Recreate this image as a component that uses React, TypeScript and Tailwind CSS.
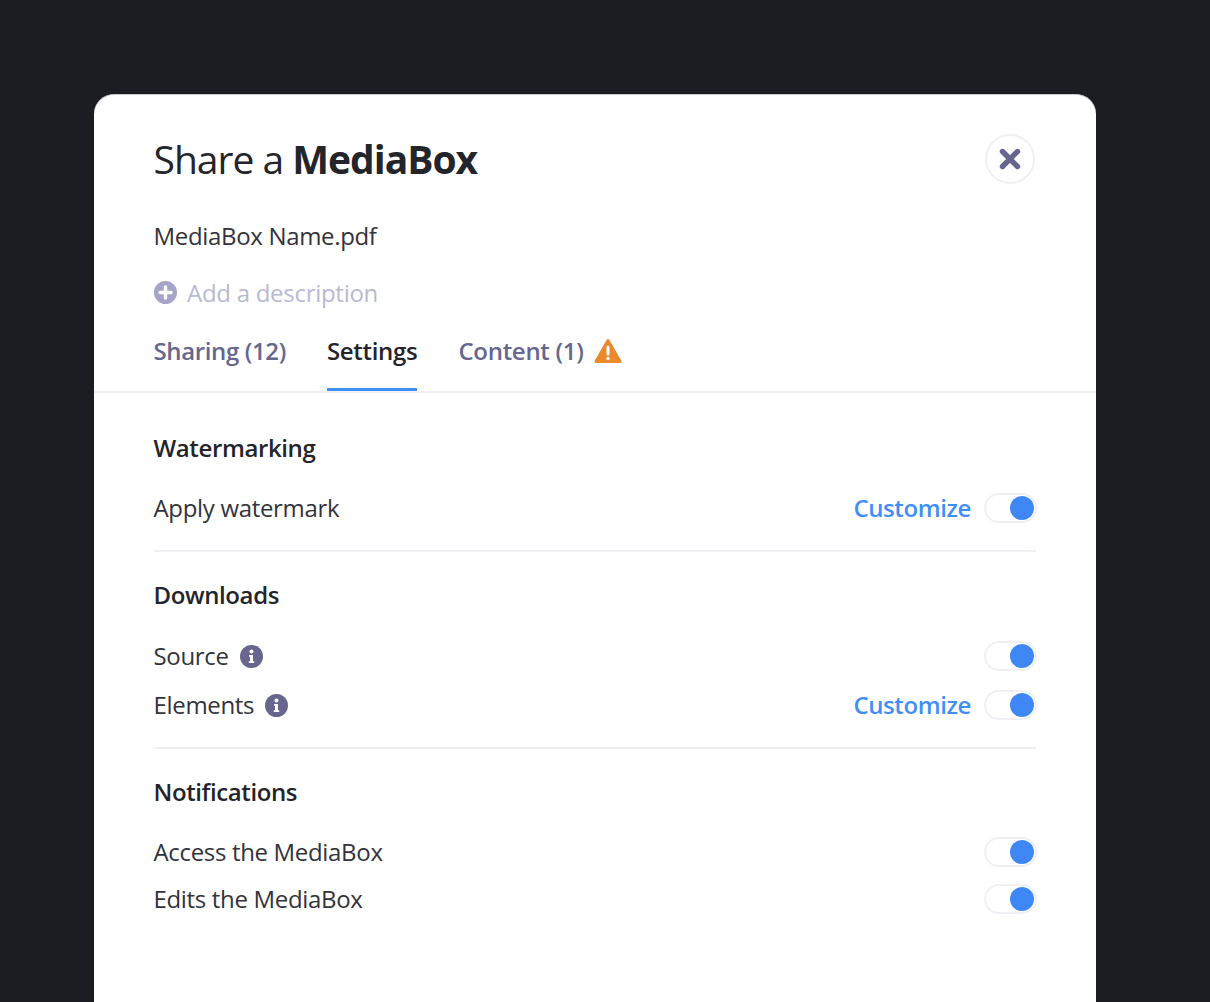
const font = "font-['Open_Sans',sans-serif]";

function Toggle() {
  return (
    <div className="w-[53px] h-[30px] -mr-[1px] rounded-full border-2 border-[#f0f0f4] bg-white flex items-center justify-end pr-[1px] shrink-0">
      <div className="w-[24px] h-[24px] rounded-full bg-[#3f87f5]" />
    </div>
  );
}

function InfoIcon() {
  return (
    <svg width="23" height="23" viewBox="0 0 23 23" className="shrink-0">
      <circle cx="11.5" cy="11.5" r="11.5" fill="#66668f" />
      <circle cx="11.5" cy="6.6" r="2" fill="#fff" />
      <path d="M9 10h4v6.2h1.2V18H8.8v-1.8H10v-4.4H9z" fill="#fff" />
    </svg>
  );
}

function Customize() {
  return <span className="text-[24px] font-semibold text-[#3f8ff7] tracking-[-0.4px]">Customize</span>;
}

function Row({ label, info, customize, className }: { label: string; info?: boolean; customize?: boolean; className?: string }) {
  return (
    <div className={`flex items-center justify-between h-[30px] ${className ?? ""}`}>
      <div className="flex items-center gap-[11px]">
        <span className="text-[24px] text-[#33333b] tracking-[-0.33px]">{label}</span>
        {info && <InfoIcon />}
      </div>
      <div className="flex items-center gap-[13px]">
        {customize && <Customize />}
        <Toggle />
      </div>
    </div>
  );
}

function Heading({ children }: { children: string }) {
  return <h3 className="text-[24px] font-semibold text-[#24242b] leading-[30px] tracking-[-0.38px]">{children}</h3>;
}

export default function App() {
  return (
    <div className={`${font} h-[1002px] bg-[#1c1c23] overflow-hidden pt-[94px] pl-[94px] pr-[114px]`}>
      <div className="bg-white rounded-t-[20px] h-[908px] border-t border-[#c9c9cf]">
        {/* Header */}
        <div className="pl-[59.5px] pr-[60px] pt-[39px]">
          <div className="flex items-start justify-between">
            <h1 className="text-[39px] leading-[50px] text-[#24242b] tracking-[-1px]">
              Share a <span className="font-bold">MediaBox</span>
            </h1>
            <button className="w-[50px] h-[50px] mr-[1px] rounded-full border-2 border-[#f0f0f4] flex items-center justify-center">
              <svg width="26" height="26" viewBox="0 0 26 26">
                <path d="M5.5 5.5L20.5 20.5M20.5 5.5L5.5 20.5" stroke="#66668f" strokeWidth="5.4" strokeLinecap="round" />
              </svg>
            </button>
          </div>
          <p className="mt-[37px] text-[24px] leading-[30px] text-[#33333b] tracking-[-0.33px]">MediaBox Name.pdf</p>
          <div className="mt-[27px] flex items-center gap-[10.5px] h-[30px]">
            <svg width="23" height="23" viewBox="0 0 23 23" className="-mt-[2px]">
              <circle cx="11.5" cy="11.5" r="11.5" fill="#a5a5c7" />
              <path d="M11.5 6v11M6 11.5h11" stroke="#fff" strokeWidth="3.4" strokeLinecap="round" />
            </svg>
            <span className="text-[24px] text-[#b9b9d3] tracking-[-0.28px]">Add a description</span>
          </div>
          <div className="mt-[25px] flex items-start gap-[41px]">
            <span className="text-[24px] leading-[36px] font-semibold text-[#66668f] tracking-[-0.37px]">Sharing (12)</span>
            <span className="text-[24px] leading-[36px] font-semibold text-[#24242b] tracking-[-0.3px] border-b-[3px] border-[#3f8ff7] pb-[19px]">Settings</span>
            <div className="flex items-center gap-[10px]">
              <span className="text-[24px] leading-[36px] font-semibold text-[#66668f] tracking-[-0.3px]">Content (1)</span>
              <svg width="28" height="26" viewBox="0 0 28 26">
                <path d="M14 2.5L26 23.5H2z" fill="#ea8a2c" stroke="#ea8a2c" strokeWidth="3" strokeLinejoin="round" />
                <path d="M14 9v7" stroke="#fff" strokeWidth="3" strokeLinecap="round" />
                <circle cx="14" cy="20.5" r="1.7" fill="#fff" />
              </svg>
            </div>
          </div>
        </div>
        <div className="h-[2px] bg-[#f0f0f4]" />

        {/* Settings */}
        <div className="pl-[59.5px] pr-[60px] pt-[40px]">
          <Heading>Watermarking</Heading>
          <Row label="Apply watermark" customize className="mt-[30px]" />
          <div className="h-[2px] bg-[#f0f0f4] mt-[27px]" />
          <div className="mt-[28px]"><Heading>Downloads</Heading></div>
          <Row label="Source" info className="mt-[31px]" />
          <Row label="Elements" info customize className="mt-[19px]" />
          <div className="h-[2px] bg-[#f0f0f4] mt-[27px]" />
          <div className="mt-[28px]"><Heading>Notifications</Heading></div>
          <Row label="Access the MediaBox" className="mt-[30px]" />
          <Row label="Edits the MediaBox" className="mt-[17px]" />
        </div>
      </div>
    </div>
  );
}
